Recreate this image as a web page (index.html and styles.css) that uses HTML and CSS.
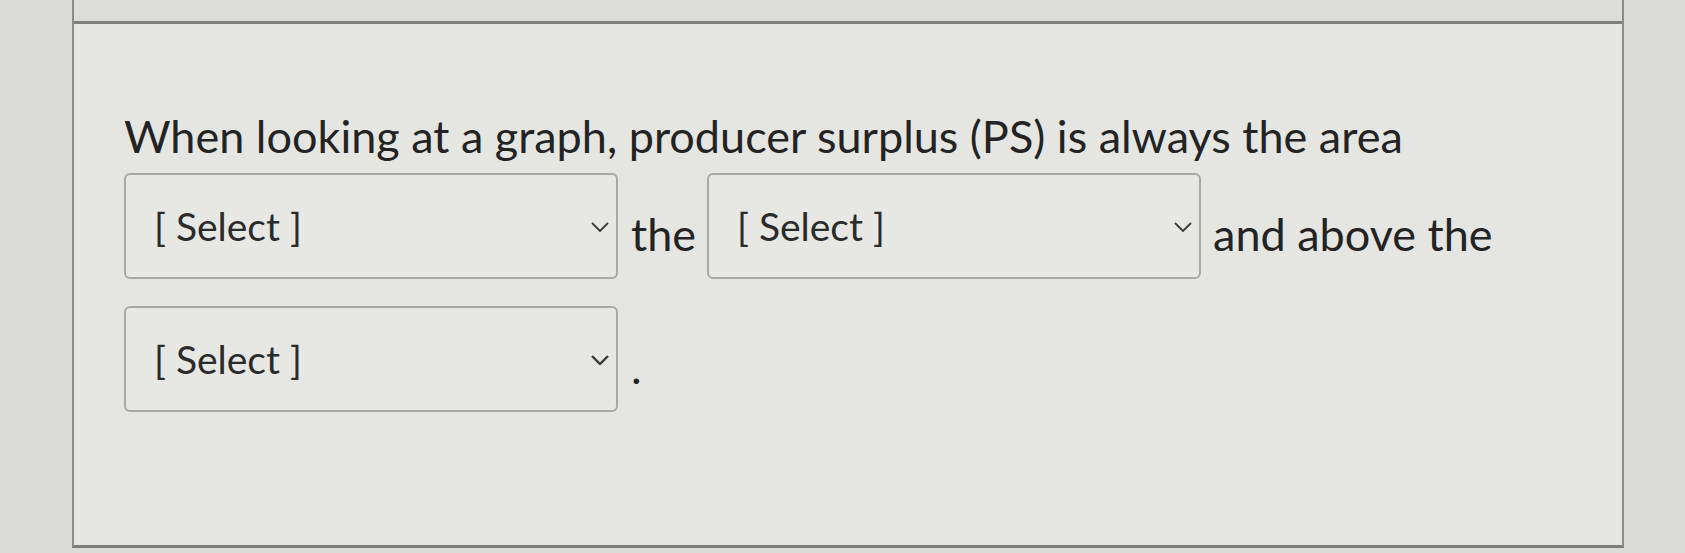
FILE: index.html
```html
<!DOCTYPE html>
<html lang="en">
<head>
<meta charset="utf-8">
<title>Question</title>
<link rel="stylesheet" href="styles.css">
</head>
<body>
<div class="frame">
  <div class="band"></div>
  <div class="content">
    <p class="question">When looking at a graph, producer surplus (PS) is always the area <span class="select"><span class="label">[ Select ]</span><svg class="chev" width="18" height="10" viewBox="0 0 18 10"><path d="M1 1 L9 9 L17 1" fill="none" stroke="#3a3a3a" stroke-width="1.8"/></svg></span><span class="gap">the</span><span class="select"><span class="label">[ Select ]</span><svg class="chev" width="18" height="10" viewBox="0 0 18 10"><path d="M1 1 L9 9 L17 1" fill="none" stroke="#3a3a3a" stroke-width="1.8"/></svg></span><span class="after">and above the</span> <span class="select"><span class="label">[ Select ]</span><svg class="chev" width="18" height="10" viewBox="0 0 18 10"><path d="M1 1 L9 9 L17 1" fill="none" stroke="#3a3a3a" stroke-width="2.4"/></svg></span><span class="dot">.</span></p>
  </div>
</div>
</body>
</html>
```

FILE: styles.css
```css
html, body {
  margin: 0;
  padding: 0;
}
body {
  background: #dbdcd8;
  width: 1685px;
  height: 553px;
  overflow: hidden;
  font-family: Lato, "Noto Sans", sans-serif;
  color: #232323;
}
.frame {
  margin-left: 72px;
  width: 1548px;
  height: 545px;
  border-left: 2px solid #8c8c8a;
  border-right: 2px solid #8c8c8a;
  border-bottom: 3px solid #7e7e7c;
  background: #e5e6e2;
  display: flex;
  flex-direction: column;
}
.band {
  height: 21px;
  background: #dcddd9;
  border-bottom: 3px solid #80807e;
  flex: none;
}
.content {
  flex: 1;
  padding: 76px 40px 0 50px;
}
.question {
  margin: 0;
  font-size: 45px;
  line-height: 73px;
  letter-spacing: 0;
}
.select {
  display: inline-flex;
  align-items: center;
  justify-content: space-between;
  box-sizing: border-box;
  width: 494px;
  height: 106px;
  margin-bottom: 27px;
  vertical-align: middle;
  border: 2px solid #a8a9a6;
  border-radius: 6px;
  background: #e7e8e4;
  padding: 0 7px 0 28px;
  line-height: 1;
}
.label {
  font-size: 39px;
  color: #2b2b2b;
}
.chev {
  display: block;
  margin-top: 2px;
}
.gap {
  margin: 0 11px 0 13px;
}
.after {
  margin-left: 12px;
}
.dot {
  margin-left: 13px;
}
```
